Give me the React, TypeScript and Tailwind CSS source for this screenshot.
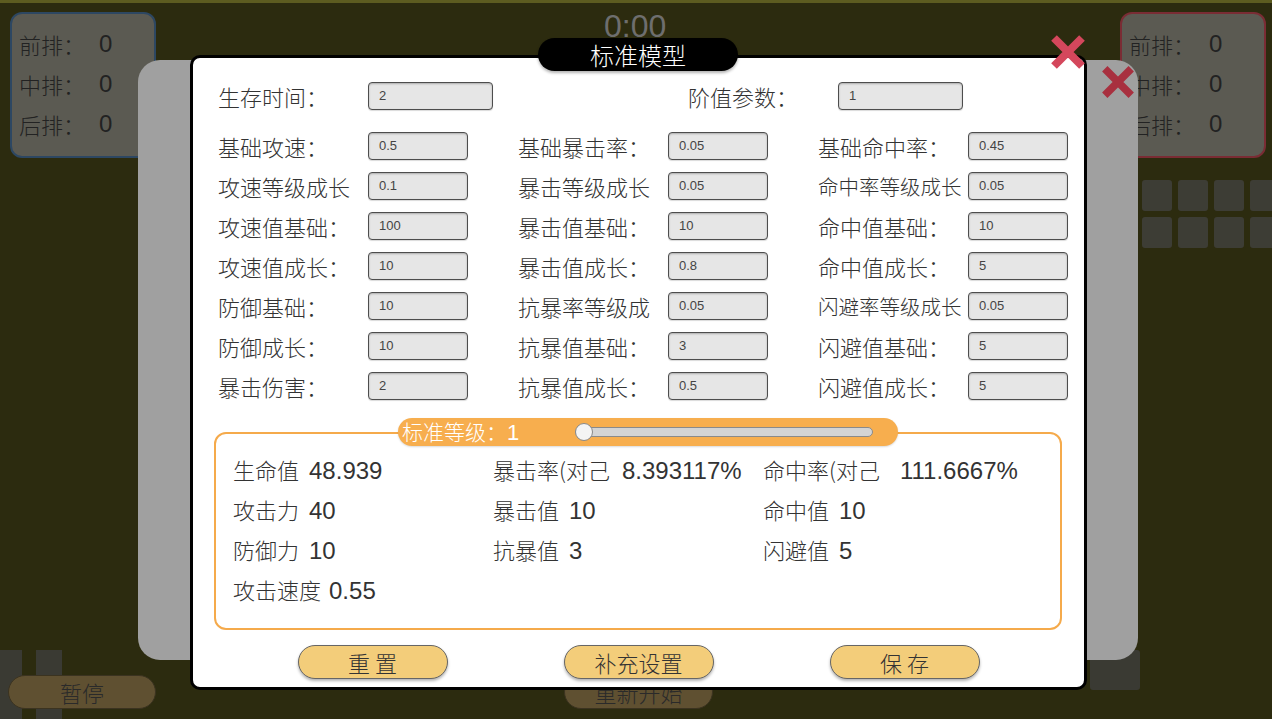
import React from "react";

type Field = {
  label: string;
  value: string;
  small?: boolean;
};

const rows: Field[][] = [
  [
    { label: "基础攻速：", value: "0.5" },
    { label: "基础暴击率：", value: "0.05" },
    { label: "基础命中率：", value: "0.45" },
  ],
  [
    { label: "攻速等级成长", value: "0.1" },
    { label: "暴击等级成长", value: "0.05" },
    { label: "命中率等级成长", value: "0.05", small: true },
  ],
  [
    { label: "攻速值基础：", value: "100" },
    { label: "暴击值基础：", value: "10" },
    { label: "命中值基础：", value: "10" },
  ],
  [
    { label: "攻速值成长：", value: "10" },
    { label: "暴击值成长：", value: "0.8" },
    { label: "命中值成长：", value: "5" },
  ],
  [
    { label: "防御基础：", value: "10" },
    { label: "抗暴率等级成", value: "0.05" },
    { label: "闪避率等级成长", value: "0.05", small: true },
  ],
  [
    { label: "防御成长：", value: "10" },
    { label: "抗暴值基础：", value: "3" },
    { label: "闪避值基础：", value: "5" },
  ],
  [
    { label: "暴击伤害：", value: "2" },
    { label: "抗暴值成长：", value: "0.5" },
    { label: "闪避值成长：", value: "5" },
  ],
];

// [label, value, gap before value]
const stats: [string, string, number][][] = [
  [
    ["生命值", "48.939", 10],
    ["暴击率(对己", "8.393117%", 12],
    ["命中率(对己", "111.6667%", 20],
  ],
  [
    ["攻击力", "40", 10],
    ["暴击值", "10", 10],
    ["命中值", "10", 10],
  ],
  [
    ["防御力", "10", 10],
    ["抗暴值", "3", 10],
    ["闪避值", "5", 10],
  ],
  [["攻击速度", "0.55", 8]],
];

const cjk = { fontFamily: '"Noto Sans CJK SC", "Noto Sans", sans-serif' };
const latin = { fontFamily: '"Liberation Sans", Arial, sans-serif' };

const Box = ({ value, wide }: { value: string; wide?: boolean }) => (
  <div
    className={`${wide ? "w-[125px]" : "w-[100px]"} h-[28px] shrink-0 flex items-center pl-[10px] bg-[#e6e6e6] border border-[#4d4d4d] rounded-[4px] shadow-[inset_0_1px_2px_rgba(0,0,0,0.25),0_1px_1px_rgba(0,0,0,0.15)] text-[13px] text-[#444] font-normal`}
    style={latin}
  >
    {value}
  </div>
);

const Team = ({ border }: { border: string }) => (
  <div
    className={`w-[146px] h-[146px] rounded-[12px] border-2 ${border} bg-[#5b5a52] pl-[7px] pt-[18px] flex flex-col gap-[16px] text-[22px] leading-[24px] text-[#222]`}
  >
    {["前排：", "中排：", "后排："].map((t) => (
      <div key={t} className="flex items-center h-[24px]">
        <span className="w-[80px]">{t}</span>
        <span className="text-[24px] leading-[24px]" style={latin}>0</span>
      </div>
    ))}
  </div>
);

const Cross = ({ color, size }: { color: string; size: number }) => (
  <svg width={size} height={size} viewBox="0 0 36 36">
    <path d="M4 4 L32 32 M32 4 L4 32" stroke={color} strokeWidth="8" strokeLinecap="butt" />
  </svg>
);

const App = () => {
  return (
    <div className="relative w-[1272px] h-[719px] overflow-hidden bg-[#2c2b0f] font-light" style={cjk}>
      <div className="h-[3px] bg-[#5d5c20]" />

      {/* game background bits */}
      <div className="absolute left-[1142px] top-[180px] grid grid-cols-[30px_30px_30px_30px] gap-[6px]">
        {Array.from({ length: 8 }).map((_, i) => (
          <div key={i} className="h-[31px] rounded-[3px] bg-[#3d3d35]" />
        ))}
      </div>
      <div className="absolute left-0 top-[650px] flex gap-[14px]">
        <div className="w-[22px] h-[69px] bg-[#3a3a33]" />
        <div className="w-[26px] h-[69px] bg-[#3a3a33]" />
      </div>
      <div className="absolute left-[1090px] top-[650px] flex gap-[6px]">
        <div className="w-[50px] h-[40px] rounded-[3px] bg-[#3a3a33]" />
      </div>

      <div className="absolute left-[10px] top-[12px]">
        <Team border="border-[#2d4762]" />
      </div>
      <div className="absolute left-[1120px] top-[12px]">
        <Team border="border-[#7a2c34]" />
      </div>

      <div className="absolute left-[604px] top-[6px] text-[32px] leading-[40px] text-[#6e6e6e]" style={latin}>
        0:00
      </div>

      <div className="absolute left-[8px] top-[675px] w-[148px] h-[34px] rounded-full bg-[#5f5031] border border-[#3b3320] flex items-center justify-center text-[22px] text-[#2a2a2a]">
        暂停
      </div>
      <div className="absolute left-[564px] top-[675px] w-[149px] h-[34px] rounded-full bg-[#5f5031] border border-[#3b3320] flex items-center justify-center text-[22px] text-[#2a2a2a]">
        重新开始
      </div>

      {/* gray back panel */}
      <div className="absolute left-[138px] top-[60px] w-[1000px] h-[600px] rounded-[22px] bg-[#a0a0a0]" />

      {/* modal */}
      <div className="absolute left-[190px] top-[55px] w-[897px] h-[635px] rounded-[10px] border-[3px] border-black bg-white">
        <div className="pl-[25px] pt-[24px] flex flex-col gap-[12px] text-[22px] leading-[28px] text-[#333]">
          <div className="flex items-center mb-[10px]">
            <span className="w-[150px]">生存时间：</span>
            <Box value="2" wide />
            <span className="ml-[195px] w-[150px]">阶值参数：</span>
            <Box value="1" wide />
          </div>
          {rows.map((row, ri) => (
            <div key={ri} className="grid grid-cols-[300px_300px_250px] items-center">
              {row.map((f) => (
                <div key={f.label} className="flex items-center">
                  <span className={`w-[150px] whitespace-nowrap ${f.small ? "text-[20.5px]" : ""}`}>{f.label}</span>
                  <Box value={f.value} />
                </div>
              ))}
            </div>
          ))}
        </div>

        <div className="relative mt-[32px] ml-[21px] w-[848px] h-[198px] rounded-[12px] border-2 border-[#f5aa4b] pl-[17px] pt-[16px]">
          <div className="absolute left-[182px] top-[-16px] w-[500px] h-[28px] rounded-full bg-[#f7ae4e] flex items-center pl-[4px] shadow-[0_1px_2px_rgba(0,0,0,0.15)]">
            <span className="w-[173px] text-[21px] leading-[28px] text-white">
              标准等级：<span style={latin} className="text-[22px]">1</span>
            </span>
            <div className="relative w-[298px] h-[10px] rounded-full bg-[#d4d4d4] border border-[#8a8a8a]">
              <div className="absolute left-[-1px] top-[-5px] w-[18px] h-[18px] rounded-full bg-[#f4f4f4] border border-[#888]" />
            </div>
          </div>
          {stats.map((r, i) => (
            <div key={i} className="grid grid-cols-[260px_270px_300px] h-[40px] items-center text-[22px] text-[#333] whitespace-nowrap">
              {r.map(([l, v, g]) => (
                <div key={l} className="flex items-baseline leading-[28px]">
                  <span>{l}</span>
                  <span className="text-[24px] leading-[28px]" style={{ ...latin, marginLeft: g }}>
                    {v}
                  </span>
                </div>
              ))}
            </div>
          ))}
        </div>

        <div className="mt-[15px] flex justify-center gap-[116px]">
          {["重 置", "补充设置", "保 存"].map((b) => (
            <div
              key={b}
              className="w-[150px] h-[34px] rounded-full bg-[#f3cd7a] border border-[#666] shadow-[0_2px_3px_rgba(0,0,0,0.3)] flex items-center justify-center text-[22px] text-[#333] whitespace-pre"
            >
              {b}
            </div>
          ))}
        </div>

        <div className="absolute left-[345px] top-[-20px] w-[200px] h-[33px] rounded-full bg-black flex items-center justify-center text-[24px] leading-[30px] text-white shadow-[0_2px_3px_rgba(0,0,0,0.3)]">
          标准模型
        </div>
      </div>

      <div className="absolute left-[1050px] top-[34px]">
        <Cross color="#d4475c" size={36} />
      </div>
      <div className="absolute left-[1101px] top-[65px]">
        <Cross color="#a8303f" size={34} />
      </div>
    </div>
  );
};

export default App;
